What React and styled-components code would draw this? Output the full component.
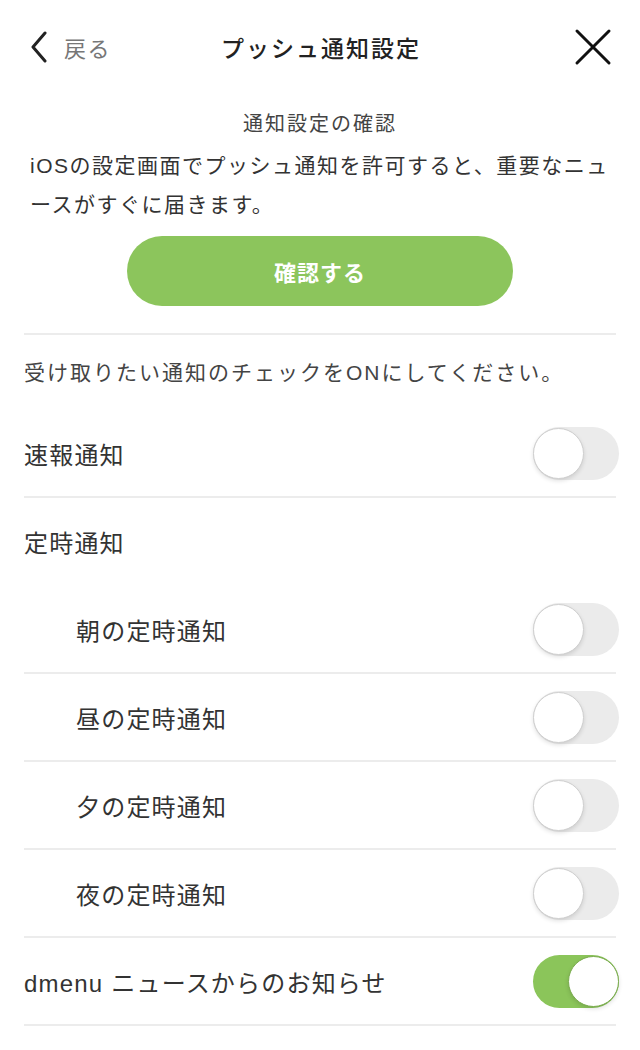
import React from "react";
import styled, { createGlobalStyle } from "styled-components";

const GlobalStyle = createGlobalStyle`
  html, body { margin: 0; padding: 0; background: #fff; }
  body {
    font-family: "Liberation Sans", "Noto Sans CJK JP", sans-serif;
    color: #333;
    -webkit-font-smoothing: antialiased;
  }
  * { box-sizing: border-box; }
`;

const Page = styled.div`
  width: 640px;
  min-height: 1050px;
  background: #fff;
`;

const Header = styled.header`
  height: 94px;
  display: grid;
  grid-template-columns: 1fr auto 1fr;
  align-items: center;
  padding: 0 28px 0 30px;
`;

const Back = styled.button`
  justify-self: start;
  display: flex;
  align-items: center;
  gap: 16px;
  border: 0;
  background: none;
  padding: 0;
  font: inherit;
  font-size: 22px;
  color: #777;
  letter-spacing: 1.5px;
`;

const Title = styled.h1`
  margin: 0;
  font-size: 23px;
  font-weight: 500;
  letter-spacing: 2px;
  color: #222;
`;

const Close = styled.button`
  justify-self: end;
  border: 0;
  background: none;
  padding: 0;
  display: flex;
`;

const Confirm = styled.section`
  display: flex;
  flex-direction: column;
  align-items: center;
  padding-top: 15px;
`;

const ConfirmTitle = styled.h2`
  margin: 0;
  font-size: 20px;
  line-height: 30px;
  font-weight: 400;
  letter-spacing: 2px;
  color: #444;
`;

const Paragraph = styled.p`
  margin: 7px 0 0;
  width: 580px;
  font-size: 21px;
  line-height: 39px;
  letter-spacing: 1.5px;
  color: #333;
`;

const ConfirmButton = styled.button`
  margin-top: 12px;
  width: 386px;
  height: 70px;
  border: 0;
  border-radius: 35px;
  background: #8cc55c;
  color: #fff;
  font: inherit;
  font-size: 22px;
  font-weight: 700;
  letter-spacing: 1px;
`;

const Divider = styled.hr`
  margin: 27px 24px 0;
  border: 0;
  height: 2px;
  background: #ececec;
`;

const Intro = styled.p`
  margin: 23px 24px 0;
  font-size: 21px;
  line-height: 30px;
  letter-spacing: 2px;
  color: #444;
`;

const List = styled.ul`
  list-style: none;
  margin: 22px 0 0;
  padding: 0;
`;

const Row = styled.li`
  height: 88px;
  margin: 0 24px;
  display: flex;
  align-items: center;
  justify-content: space-between;
  padding-left: ${(p) => (p.$indent ? "52px" : "0")};
  border-bottom: ${(p) => (p.$noLine ? "2px solid transparent" : "2px solid #ececec")};
`;

const Label = styled.span`
  font-size: 24px;
  letter-spacing: 1.2px;
  color: #333;
`;

const Track = styled.span`
  position: relative;
  width: 86px;
  height: 53px;
  margin-right: -3px;
  border-radius: 27px;
  background: ${(p) => (p.$on ? "#8bc55a" : "#ebebeb")};
  flex: none;
`;

const Knob = styled.span`
  position: absolute;
  top: 1px;
  left: ${(p) => (p.$on ? "35px" : "0")};
  width: 51px;
  height: 51px;
  border-radius: 50%;
  background: #fff;
  border: 1px solid ${(p) => (p.$on ? "#7aab4e" : "#cfcfcf")};
  box-shadow: 0 2px 4px rgba(0, 0, 0, 0.12);
`;

const Toggle = ({ on }) => (
  <Track $on={on} role="switch" aria-checked={on}>
    <Knob $on={on} />
  </Track>
);

const rows = [
  { label: "速報通知", toggle: true, on: false },
  { label: "定時通知", toggle: false, noLine: true },
  { label: "朝の定時通知", toggle: true, on: false, indent: true },
  { label: "昼の定時通知", toggle: true, on: false, indent: true },
  { label: "夕の定時通知", toggle: true, on: false, indent: true },
  { label: "夜の定時通知", toggle: true, on: false, indent: true },
  { label: "dmenu ニュースからのお知らせ", toggle: true, on: true },
];

export default function App() {
  return (
    <>
      <GlobalStyle />
      <Page>
        <Header>
          <Back>
            <svg width="18" height="32" viewBox="0 0 18 32" fill="none">
              <path d="M15 2 L3 16 L15 30" stroke="#222" strokeWidth="3" strokeLinecap="round" strokeLinejoin="round" />
            </svg>
            戻る
          </Back>
          <Title>プッシュ通知設定</Title>
          <Close aria-label="閉じる">
            <svg width="38" height="38" viewBox="0 0 38 38" fill="none">
              <path d="M3 3 L35 35 M35 3 L3 35" stroke="#111" strokeWidth="3" strokeLinecap="round" />
            </svg>
          </Close>
        </Header>

        <Confirm>
          <ConfirmTitle>通知設定の確認</ConfirmTitle>
          <Paragraph>
            iOSの設定画面でプッシュ通知を許可すると、重要なニュースがすぐに届きます。
          </Paragraph>
          <ConfirmButton>確認する</ConfirmButton>
        </Confirm>

        <Divider />

        <Intro>受け取りたい通知のチェックをONにしてください。</Intro>

        <List>
          {rows.map((r) => (
            <Row key={r.label} $indent={r.indent} $noLine={r.noLine}>
              <Label>{r.label}</Label>
              {r.toggle && <Toggle on={r.on} />}
            </Row>
          ))}
        </List>
      </Page>
    </>
  );
}
